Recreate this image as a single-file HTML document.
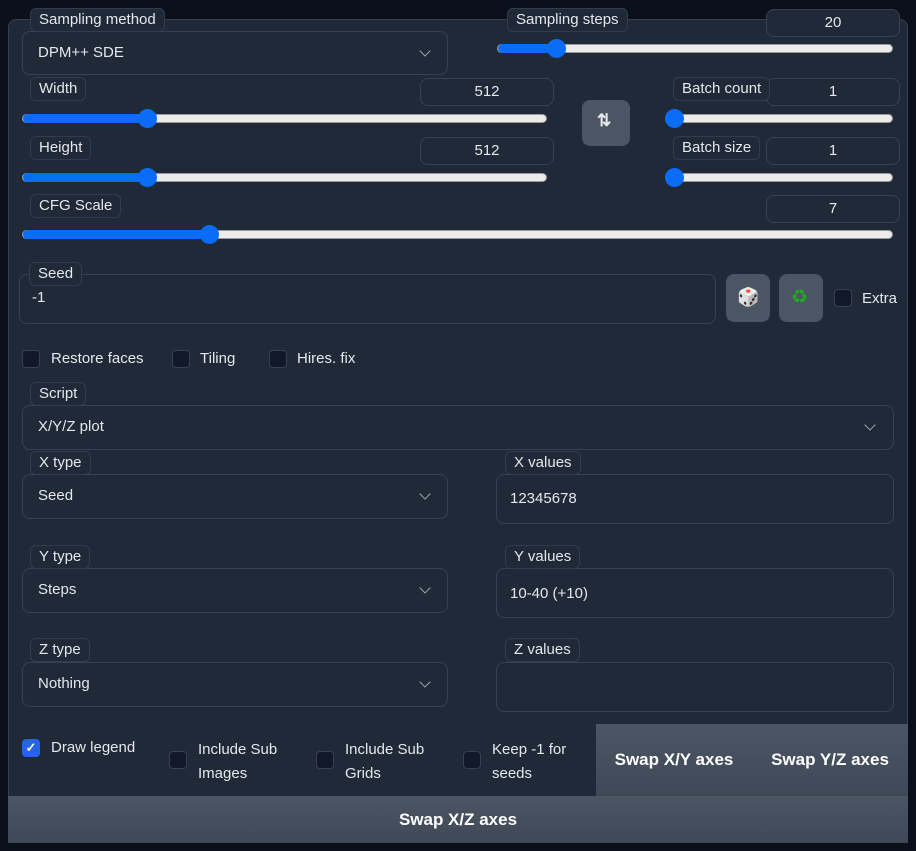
<!DOCTYPE html>
<html><head><meta charset="utf-8"><style>
*{box-sizing:border-box;margin:0;padding:0}
body{width:916px;height:851px;background:#0b0f19;font-family:"Liberation Sans",sans-serif;color:#e5e7eb;position:relative;overflow:hidden;font-size:15px}
.panel{position:absolute;left:8px;top:19px;width:900px;height:824px;background:#1f2937;border:1px solid #374151;border-radius:8px 8px 0 0}
.a{position:absolute}
.lbl{position:absolute;height:24px;line-height:22px;padding:0 8px;border:1px solid #323c4c;border-radius:6px;background:#1f2937;font-size:15px;color:#e5e7eb;z-index:2}
.box{position:absolute;border:1px solid #374151;border-radius:8px;background:#1f2937}
.sel{line-height:42px;padding-left:15px;font-size:15px}
.num{position:absolute;border:1px solid #374151;border-radius:8px;text-align:center;line-height:26px;font-size:15px;background:#1f2937}
.tr{position:absolute;height:9px;border-radius:5px;background:#ececec;border:1px solid #999}
.fill{position:absolute;left:0;top:-1px;height:9px;border-radius:5px;background:#0b6cf7}
.th{position:absolute;top:-6px;width:19px;height:19px;border-radius:50%;background:#0b6cf7;margin-left:-9px}
.chev{position:absolute;width:8px;height:8px;border-right:1.5px solid #9ca3af;border-bottom:1.5px solid #9ca3af;transform:rotate(45deg)}
.cb{position:absolute;width:18px;height:18px;border:1px solid #374151;border-radius:4px;background:#111827}
.t{position:absolute;font-size:15px;line-height:20px}
.btn{position:absolute;background:#4b5563;border-radius:8px;border:1px solid #4b5563}
.big{position:absolute;background:linear-gradient(#4b5563,#3f4856);color:#fff;font-weight:bold;font-size:17px;text-align:center}
</style></head><body>
<div class="panel"></div>

<div class="lbl" style="left:30px;top:8px">Sampling method</div>
<div class="box sel" style="left:22px;top:31px;width:426px;height:44px">DPM++ SDE</div>
<div class="chev" style="left:421px;top:47px"></div>

<div class="lbl" style="left:507px;top:8px">Sampling steps</div>
<div class="num" style="left:766px;top:9px;width:134px;height:28px">20</div>
<div class="tr" style="left:497px;top:44px;width:396px"><div class="fill" style="width:58px"></div><div class="th" style="left:58px"></div></div>

<div class="lbl" style="left:30px;top:77px">Width</div>
<div class="num" style="left:420px;top:78px;width:134px;height:28px">512</div>
<div class="tr" style="left:22px;top:114px;width:525px"><div class="fill" style="width:124px"></div><div class="th" style="left:124px"></div></div>

<div class="btn" style="left:582px;top:100px;width:48px;height:46px"><div class="a" style="left:14px;top:10px;font-weight:bold;font-size:17px;color:#e5e7eb">⇅</div></div>

<div class="lbl" style="left:673px;top:77px">Batch count</div>
<div class="num" style="left:766px;top:78px;width:134px;height:28px">1</div>
<div class="tr" style="left:665px;top:114px;width:228px"><div class="fill" style="width:8px"></div><div class="th" style="left:8px"></div></div>

<div class="lbl" style="left:30px;top:136px">Height</div>
<div class="num" style="left:420px;top:137px;width:134px;height:28px">512</div>
<div class="tr" style="left:22px;top:173px;width:525px"><div class="fill" style="width:124px"></div><div class="th" style="left:124px"></div></div>

<div class="lbl" style="left:673px;top:136px">Batch size</div>
<div class="num" style="left:766px;top:137px;width:134px;height:28px">1</div>
<div class="tr" style="left:665px;top:173px;width:228px"><div class="fill" style="width:8px"></div><div class="th" style="left:8px"></div></div>

<div class="lbl" style="left:30px;top:194px">CFG Scale</div>
<div class="num" style="left:766px;top:195px;width:134px;height:28px">7</div>
<div class="tr" style="left:22px;top:230px;width:871px"><div class="fill" style="width:186px"></div><div class="th" style="left:186px"></div></div>

<div class="lbl" style="left:29px;top:262px">Seed</div>
<div class="box" style="left:19px;top:274px;width:697px;height:50px"></div>
<div class="t" style="left:32px;top:288px">-1</div>
<div class="btn" style="left:726px;top:274px;width:44px;height:48px"><div class="a" style="left:10px;top:12px;font-size:18px">🎲</div></div>
<div class="btn" style="left:779px;top:274px;width:44px;height:48px"><div class="a" style="left:11px;top:11px;font-size:19px;color:#22aa22">♻</div></div>
<div class="cb" style="left:834px;top:289px"></div>
<div class="t" style="left:862px;top:289px">Extra</div>

<div class="cb" style="left:22px;top:350px"></div><div class="t" style="left:51px;top:349px">Restore faces</div>
<div class="cb" style="left:172px;top:350px"></div><div class="t" style="left:200px;top:349px">Tiling</div>
<div class="cb" style="left:269px;top:350px"></div><div class="t" style="left:297px;top:349px">Hires. fix</div>

<div class="lbl" style="left:30px;top:382px">Script</div>
<div class="box sel" style="left:22px;top:405px;width:872px;height:45px">X/Y/Z plot</div>
<div class="chev" style="left:866px;top:421px"></div>

<div class="lbl" style="left:30px;top:451px">X type</div>
<div class="box sel" style="left:22px;top:474px;width:426px;height:45px">Seed</div>
<div class="chev" style="left:421px;top:490px"></div>
<div class="lbl" style="left:505px;top:451px">X values</div>
<div class="box" style="left:496px;top:474px;width:398px;height:50px"></div>
<div class="t" style="left:510px;top:489px">12345678</div>

<div class="lbl" style="left:30px;top:545px">Y type</div>
<div class="box sel" style="left:22px;top:568px;width:426px;height:45px">Steps</div>
<div class="chev" style="left:421px;top:584px"></div>
<div class="lbl" style="left:505px;top:545px">Y values</div>
<div class="box" style="left:496px;top:568px;width:398px;height:50px"></div>
<div class="t" style="left:510px;top:584px">10-40 (+10)</div>

<div class="lbl" style="left:30px;top:638px">Z type</div>
<div class="box sel" style="left:22px;top:662px;width:426px;height:45px">Nothing</div>
<div class="chev" style="left:421px;top:678px"></div>
<div class="lbl" style="left:505px;top:638px">Z values</div>
<div class="box" style="left:496px;top:662px;width:398px;height:50px"></div>

<div class="cb" style="left:22px;top:739px;background:#2563eb;border-color:#2563eb;color:#fff;font-size:13px;text-align:center;line-height:16px;font-weight:bold">✓</div>
<div class="t" style="left:51px;top:738px">Draw legend</div>
<div class="cb" style="left:169px;top:751px"></div><div class="t" style="left:198px;top:738px;line-height:24px">Include Sub<br>Images</div>
<div class="cb" style="left:316px;top:751px"></div><div class="t" style="left:345px;top:738px;line-height:24px">Include Sub<br>Grids</div>
<div class="cb" style="left:463px;top:751px"></div><div class="t" style="left:492px;top:738px;line-height:24px">Keep -1 for<br>seeds</div>

<div class="big" style="left:596px;top:724px;width:156px;height:72px;line-height:72px">Swap X/Y axes</div>
<div class="big" style="left:752px;top:724px;width:156px;height:72px;line-height:72px">Swap Y/Z axes</div>
<div class="big" style="left:8px;top:796px;width:900px;height:47px;line-height:47px">Swap X/Z axes</div>
</body></html>
